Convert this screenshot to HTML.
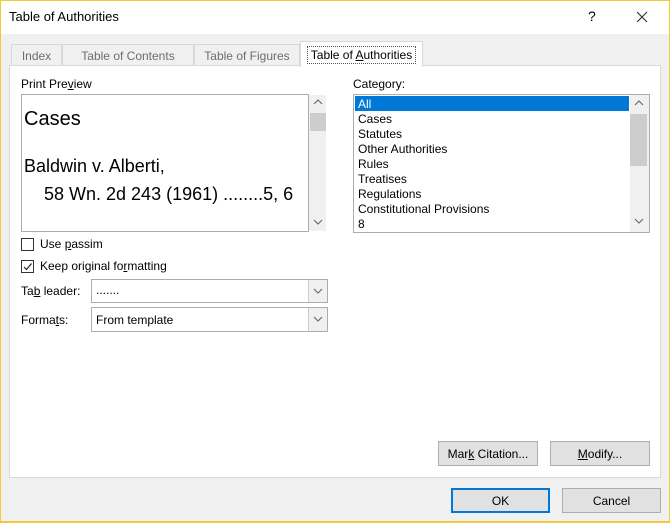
<!DOCTYPE html>
<html><head><style>
*{box-sizing:border-box;margin:0;padding:0}
body{width:670px;height:523px;overflow:hidden;font-family:"Segoe UI","Liberation Sans",sans-serif;font-size:12px;color:#000;background:#f0f0f0;position:relative}
.frame{position:absolute;left:0;top:0;width:670px;height:523px;border:1px solid #f2c938;border-bottom:2px solid #f2c938}
.title{position:absolute;left:1px;top:1px;width:668px;height:33px;background:#fff}
.abs{position:absolute;white-space:nowrap}
.tab{position:absolute;top:44px;height:22px;border:1px solid #d9d9d9;border-bottom:none;background:#f0f0f0;color:#6d6d6d;text-align:center;line-height:22px}
.panel{position:absolute;left:9px;top:65px;width:652px;height:413px;background:#fff;border:1px solid #dadada}
.box{position:absolute;border:1px solid #adadad;background:#fff}
.btn{position:absolute;border:1px solid #adadad;background:#e1e1e1;text-align:center;line-height:24px}
.sb{position:absolute;background:#f0f0f0}
.thumb{position:absolute;background:#cdcdcd}
u{text-decoration:underline}
</style></head><body>
<div class="title"></div>
<div class="abs" style="left:9px;top:9px;font-size:13px">Table of Authorities</div>
<div class="abs" style="left:588px;top:8px;font-size:14px">?</div>
<svg class="abs" style="left:636px;top:11px" width="12" height="12"><path d="M1 1L11 11M11 1L1 11" stroke="#333" stroke-width="1.2"/></svg>

<div class="tab" style="left:11px;width:51px">Index</div>
<div class="tab" style="left:62px;width:132px">Table of Contents</div>
<div class="tab" style="left:194px;width:106px">Table of Figures</div>
<div class="panel"></div>
<div class="tab" style="left:300px;top:41px;width:123px;height:26px;background:#fff;color:#000;border-color:#d9d9d9;line-height:26px;z-index:2"><span style="border:1px dotted #555;padding:1px 3px">Table of <u>A</u>uthorities</span></div>

<div class="abs" style="left:21px;top:77px">Print Pre<u>v</u>iew</div>
<div class="box" style="left:21px;top:94px;width:288px;height:138px"></div>
<div class="abs" style="left:24px;top:108px;font-size:20px">Cases</div>
<div class="abs" style="left:24px;top:156px;font-size:18px">Baldwin v. Alberti,</div>
<div class="abs" style="left:44px;top:184px;font-size:18px">58 Wn. 2d 243 (1961) ........5, 6</div>
<div class="sb" style="left:309px;top:95px;width:17px;height:136px"></div>
<div class="thumb" style="left:310px;top:113px;width:16px;height:18px"></div>
<svg class="abs" style="left:313px;top:99px" width="10" height="7"><path d="M1 5L5 1L9 5" stroke="#606060" fill="none"/></svg>
<svg class="abs" style="left:313px;top:219px" width="10" height="7"><path d="M1 1L5 5L9 1" stroke="#606060" fill="none"/></svg>

<div class="box" style="left:21px;top:238px;width:13px;height:13px;border-color:#333"></div>
<div class="abs" style="left:40px;top:237px">Use <u>p</u>assim</div>
<div class="box" style="left:21px;top:260px;width:13px;height:13px;border-color:#333"></div>
<svg class="abs" style="left:22px;top:261px" width="11" height="11"><path d="M2 6L4.5 8.5L9.5 2.5" stroke="#222" fill="none" stroke-width="1.2"/></svg>
<div class="abs" style="left:40px;top:259px">Keep original fo<u>r</u>matting</div>

<div class="abs" style="left:21px;top:284px">Ta<u>b</u> leader:</div>
<div class="box" style="left:91px;top:279px;width:237px;height:24px"></div>
<div class="abs" style="left:96px;top:283px">.......</div>
<div class="sb" style="left:308px;top:280px;width:19px;height:22px;border-left:1px solid #ccc"></div>
<svg class="abs" style="left:313px;top:288px" width="10" height="7"><path d="M1 1L5 5L9 1" stroke="#606060" fill="none"/></svg>
<div class="abs" style="left:21px;top:313px">Forma<u>t</u>s:</div>
<div class="box" style="left:91px;top:307px;width:237px;height:25px"></div>
<div class="abs" style="left:96px;top:313px">From template</div>
<div class="sb" style="left:308px;top:308px;width:19px;height:23px;border-left:1px solid #ccc"></div>
<svg class="abs" style="left:313px;top:316px" width="10" height="7"><path d="M1 1L5 5L9 1" stroke="#606060" fill="none"/></svg>

<div class="abs" style="left:353px;top:77px">Cate<u>g</u>ory:</div>
<div class="box" style="left:353px;top:94px;width:297px;height:139px"></div>
<div class="abs" style="left:355px;top:96px;width:274px;height:15px;background:#0078d7"></div>
<div class="abs" style="left:358px;top:97px;color:#fff;line-height:15px">All</div>
<div class="abs" style="left:358px;top:112px;line-height:15px">Cases<br>Statutes<br>Other Authorities<br>Rules<br>Treatises<br>Regulations<br>Constitutional Provisions<br>8</div>
<div class="sb" style="left:630px;top:95px;width:19px;height:137px"></div>
<div class="thumb" style="left:630px;top:114px;width:17px;height:52px"></div>
<svg class="abs" style="left:634px;top:100px" width="10" height="7"><path d="M1 5L5 1L9 5" stroke="#606060" fill="none"/></svg>
<svg class="abs" style="left:634px;top:218px" width="10" height="7"><path d="M1 1L5 5L9 1" stroke="#606060" fill="none"/></svg>

<div class="btn" style="left:438px;top:441px;width:100px;height:25px">Mar<u>k</u> Citation...</div>
<div class="btn" style="left:550px;top:441px;width:100px;height:25px"><u>M</u>odify...</div>
<div class="btn" style="left:451px;top:488px;width:99px;height:25px;border:2px solid #0078d7;line-height:22px">OK</div>
<div class="btn" style="left:562px;top:488px;width:99px;height:25px">Cancel</div>
<div class="frame"></div>
</body></html>
